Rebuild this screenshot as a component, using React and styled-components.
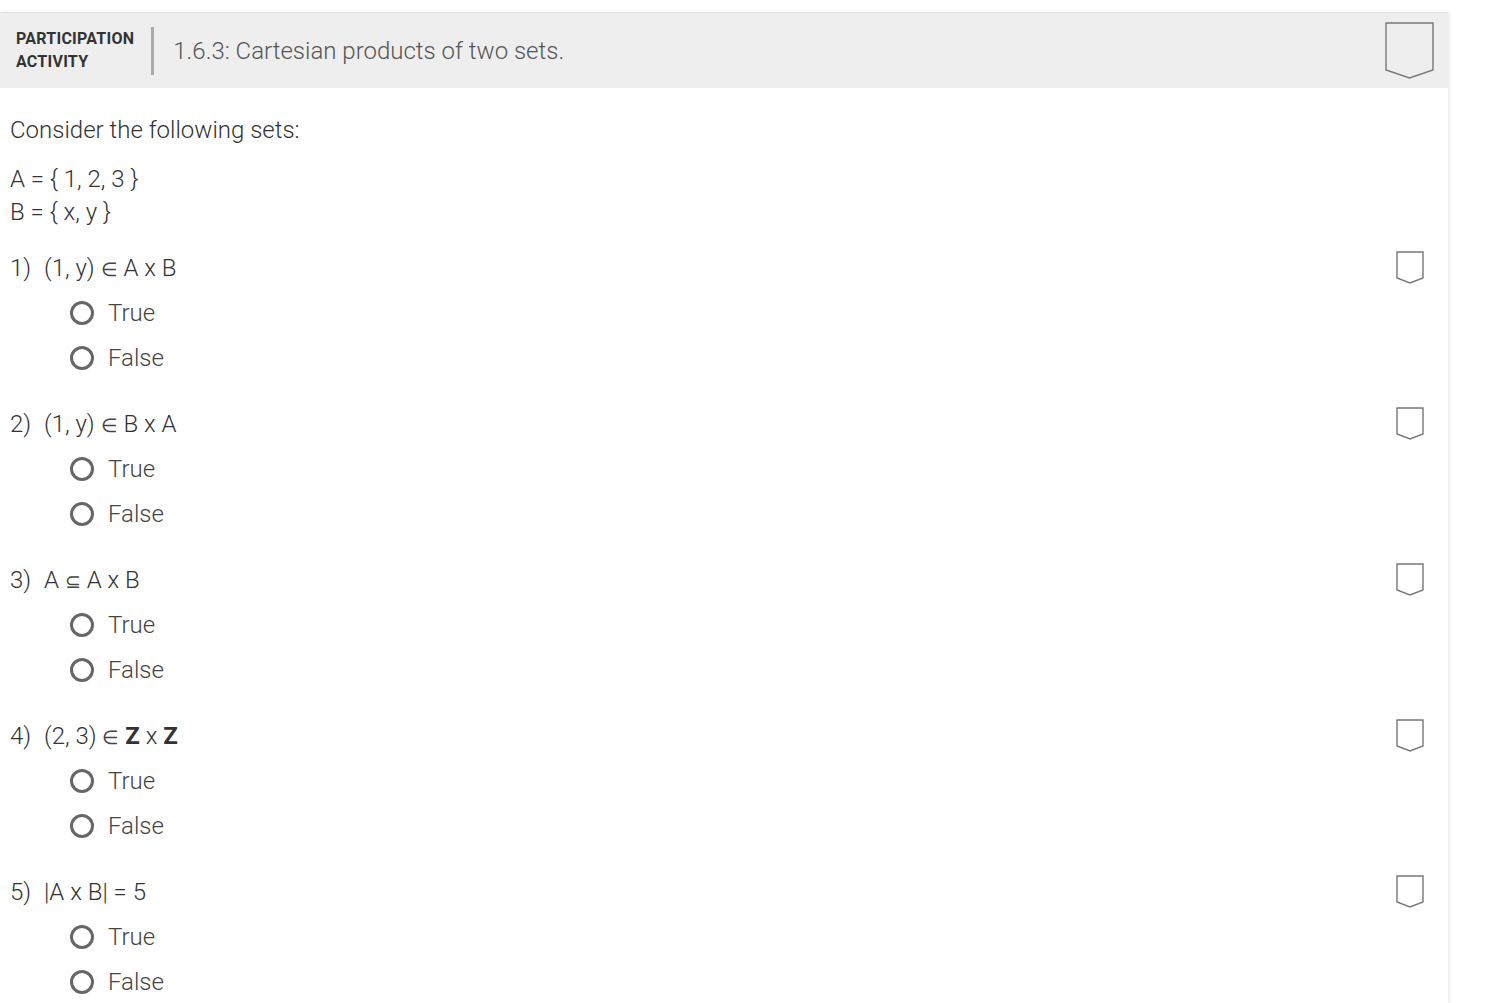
import React from 'react';
import styled, { createGlobalStyle } from 'styled-components';

const GlobalStyle = createGlobalStyle`
  html, body {
    margin: 0;
    padding: 0;
    background: #fff;
    overflow: hidden;
  }
  body {
    font-family: Roboto, "Liberation Sans", sans-serif;
  }
`;

const Card = styled.section`
  width: 1448px;
  margin-top: 12px;
  background: #fff;
  border-top: 1px solid #e2e2e2;
  box-shadow: 2px 0 3px rgba(0, 0, 0, 0.08);
  min-height: 990px;
`;

const Header = styled.header`
  display: flex;
  align-items: center;
  height: 75px;
  background: #eeeeee;
  padding: 0 14px 0 16px;
`;

const Label = styled.div`
  font-size: 16px;
  font-weight: 700;
  line-height: 23px;
  color: #333;
  letter-spacing: 0.25px;
  padding: 0 17px 1px 0;
  border-right: 3px solid #aaa;
  height: 47px;
  display: flex;
  align-items: center;
`;

const Title = styled.h2`
  flex: 1;
  margin: 1px 0 0 19px;
  font-size: 24px;
  font-weight: 300;
  color: #555;
`;

const Content = styled.div`
  padding: 25px 24px 0 10px;
  color: #333;
  font-size: 24px;
  font-weight: 300;
`;

const Line = styled.p`
  margin: 0;
  line-height: 34px;
`;

const SetLine = styled.div`
  line-height: 33px;
`;

const Sets = styled.div`
  margin: 16px 0 22px;
`;

const Question = styled.div`
  display: flex;
  justify-content: space-between;
  align-items: flex-start;
  margin-bottom: 32px;
`;

const QuestionRow = styled.div`
  display: flex;
  height: 34px;
  line-height: 34px;
  overflow: visible;
`;

const Num = styled.span`
  width: 34px;
`;

const Sym = styled.span`
  font-family: "DejaVu Sans", sans-serif;
  font-size: 19px;
  font-weight: 200;
  line-height: 1;
  color: #444;
`;

const Z = styled.b`
  font-weight: 700;
`;

const Options = styled.div`
  display: flex;
  flex-direction: column;
  gap: 11px;
  margin: 11px 0 0 60px;
`;

const Option = styled.label`
  display: flex;
  align-items: center;
  height: 34px;
  gap: 14px;
  color: #444;
  cursor: pointer;
`;

const Radio = styled.span`
  width: 18px;
  height: 18px;
  border: 3px solid #666;
  border-radius: 50%;
`;

const Badge = ({ big }) => {
  const w = big ? 47 : 26;
  const h = big ? 55 : 31;
  const s = big ? 47 : 26;
  return (
    <svg width={w + 2} height={h + 2} viewBox={`-1 -1 ${w + 2} ${h + 2}`}>
      <polygon
        points={`0,0 ${w},0 ${w},${s} ${w / 2},${h} 0,${s}`}
        fill={big ? '#eee' : '#fff'}
        stroke="#777"
        strokeWidth="1.4"
      />
    </svg>
  );
};

const questions = [
  { n: '1)', text: <>(1, y) <Sym>∈</Sym> A x B</> },
  { n: '2)', text: <>(1, y) <Sym>∈</Sym> B x A</> },
  { n: '3)', text: <>A <Sym>⊆</Sym> A x B</> },
  { n: '4)', text: <>(2, 3) <Sym>∈</Sym> <Z>Z</Z> x <Z>Z</Z></> },
  { n: '5)', text: <>|A x B| = 5</> },
];

export default function App() {
  return (
    <>
      <GlobalStyle />
      <Card>
        <Header>
          <Label>
            PARTICIPATION
            <br />
            ACTIVITY
          </Label>
          <Title>1.6.3: Cartesian products of two sets.</Title>
          <Badge big />
        </Header>
        <Content>
          <Line>Consider the following sets:</Line>
          <Sets>
            <SetLine>A = {'{'} 1, 2, 3 {'}'}</SetLine>
            <SetLine>B = {'{'} x, y {'}'}</SetLine>
          </Sets>
          {questions.map((q) => (
            <Question key={q.n}>
              <div>
                <QuestionRow>
                  <Num>{q.n}</Num>
                  <span>{q.text}</span>
                </QuestionRow>
                <Options>
                  <Option>
                    <Radio />
                    True
                  </Option>
                  <Option>
                    <Radio />
                    False
                  </Option>
                </Options>
              </div>
              <Badge />
            </Question>
          ))}
        </Content>
      </Card>
    </>
  );
}
